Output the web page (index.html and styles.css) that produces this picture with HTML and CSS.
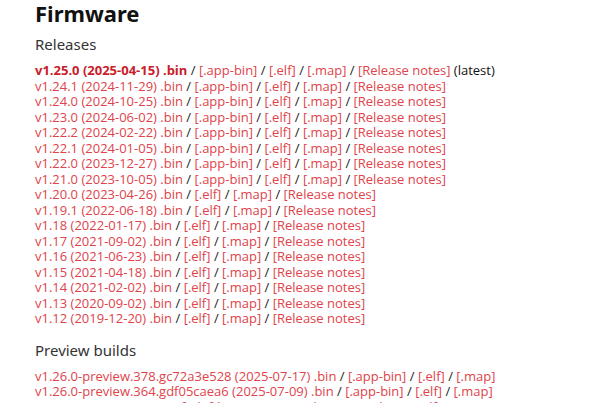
FILE: index.html
```
<!DOCTYPE html>
<html>
<head>
<meta charset="utf-8">
<link rel="stylesheet" href="styles.css">
</head>
<body>
<div class="page">
  <h1 class="title">Firmware</h1>
  <h2 class="section">Releases</h2>
  <ul class="list">
    <li class="latest"><a class="strong" href="#">v1.25.0 (2025-04-15) .bin</a> / <a href="#">[.app-bin]</a> / <a href="#">[.elf]</a> / <a href="#">[.map]</a> / <a href="#">[Release notes]</a> <span class="note">(latest)</span></li>
    <li><a href="#">v1.24.1 (2024-11-29) .bin</a> / <a href="#">[.app-bin]</a> / <a href="#">[.elf]</a> / <a href="#">[.map]</a> / <a href="#">[Release notes]</a></li>
    <li><a href="#">v1.24.0 (2024-10-25) .bin</a> / <a href="#">[.app-bin]</a> / <a href="#">[.elf]</a> / <a href="#">[.map]</a> / <a href="#">[Release notes]</a></li>
    <li><a href="#">v1.23.0 (2024-06-02) .bin</a> / <a href="#">[.app-bin]</a> / <a href="#">[.elf]</a> / <a href="#">[.map]</a> / <a href="#">[Release notes]</a></li>
    <li><a href="#">v1.22.2 (2024-02-22) .bin</a> / <a href="#">[.app-bin]</a> / <a href="#">[.elf]</a> / <a href="#">[.map]</a> / <a href="#">[Release notes]</a></li>
    <li><a href="#">v1.22.1 (2024-01-05) .bin</a> / <a href="#">[.app-bin]</a> / <a href="#">[.elf]</a> / <a href="#">[.map]</a> / <a href="#">[Release notes]</a></li>
    <li><a href="#">v1.22.0 (2023-12-27) .bin</a> / <a href="#">[.app-bin]</a> / <a href="#">[.elf]</a> / <a href="#">[.map]</a> / <a href="#">[Release notes]</a></li>
    <li><a href="#">v1.21.0 (2023-10-05) .bin</a> / <a href="#">[.app-bin]</a> / <a href="#">[.elf]</a> / <a href="#">[.map]</a> / <a href="#">[Release notes]</a></li>
    <li><a href="#">v1.20.0 (2023-04-26) .bin</a> / <a href="#">[.elf]</a> / <a href="#">[.map]</a> / <a href="#">[Release notes]</a></li>
    <li><a href="#">v1.19.1 (2022-06-18) .bin</a> / <a href="#">[.elf]</a> / <a href="#">[.map]</a> / <a href="#">[Release notes]</a></li>
    <li><a href="#">v1.18 (2022-01-17) .bin</a> / <a href="#">[.elf]</a> / <a href="#">[.map]</a> / <a href="#">[Release notes]</a></li>
    <li><a href="#">v1.17 (2021-09-02) .bin</a> / <a href="#">[.elf]</a> / <a href="#">[.map]</a> / <a href="#">[Release notes]</a></li>
    <li><a href="#">v1.16 (2021-06-23) .bin</a> / <a href="#">[.elf]</a> / <a href="#">[.map]</a> / <a href="#">[Release notes]</a></li>
    <li><a href="#">v1.15 (2021-04-18) .bin</a> / <a href="#">[.elf]</a> / <a href="#">[.map]</a> / <a href="#">[Release notes]</a></li>
    <li><a href="#">v1.14 (2021-02-02) .bin</a> / <a href="#">[.elf]</a> / <a href="#">[.map]</a> / <a href="#">[Release notes]</a></li>
    <li><a href="#">v1.13 (2020-09-02) .bin</a> / <a href="#">[.elf]</a> / <a href="#">[.map]</a> / <a href="#">[Release notes]</a></li>
    <li><a href="#">v1.12 (2019-12-20) .bin</a> / <a href="#">[.elf]</a> / <a href="#">[.map]</a> / <a href="#">[Release notes]</a></li>
  </ul>
  <h2 class="section later">Preview builds</h2>
  <ul class="list">
    <li><a href="#">v1.26.0-preview.378.gc72a3e528 (2025-07-17) .bin</a> / <a href="#">[.app-bin]</a> / <a href="#">[.elf]</a> / <a href="#">[.map]</a></li>
    <li><a href="#">v1.26.0-preview.364.gdf05caea6 (2025-07-09) .bin</a> / <a href="#">[.app-bin]</a> / <a href="#">[.elf]</a> / <a href="#">[.map]</a></li>
    <li><a href="#">v1.26.0-preview.338.g16f0d7fde (2025-07-02) .bin</a> / <a href="#">[.app-bin]</a> / <a href="#">[.elf]</a> / <a href="#">[.map]</a></li>
  </ul>
</div>
</body>
</html>
```
FILE: styles.css
```
html, body {
  margin: 0;
  padding: 0;
  background: #ffffff;
}
.page {
  padding: 0 0 0 35px;
  font-family: "Open Sans", "Noto Sans", sans-serif;
  color: #222222;
}
.title {
  margin: 0;
  font-family: "Noto Sans", "Open Sans", sans-serif;
  font-weight: 700;
  font-size: 22px;
  line-height: 26px;
  color: #111111;
}
.section {
  margin: 7px 0 8px 0;
  font-family: "Noto Sans", "Open Sans", sans-serif;
  font-weight: 400;
  font-size: 15px;
  line-height: 22px;
  color: #333333;
}
.section.later {
  margin-bottom: 8px;
}
.list {
  list-style: none;
  margin: 0 0 12px 0;
  padding: 0;
  font-size: 13px;
  line-height: 15.5px;
}
.list a {
  color: #e0434b;
  text-decoration: none;
}
.list a.strong {
  color: #c8202a;
  font-weight: 700;
}
.note {
  color: #111111;
}
```
